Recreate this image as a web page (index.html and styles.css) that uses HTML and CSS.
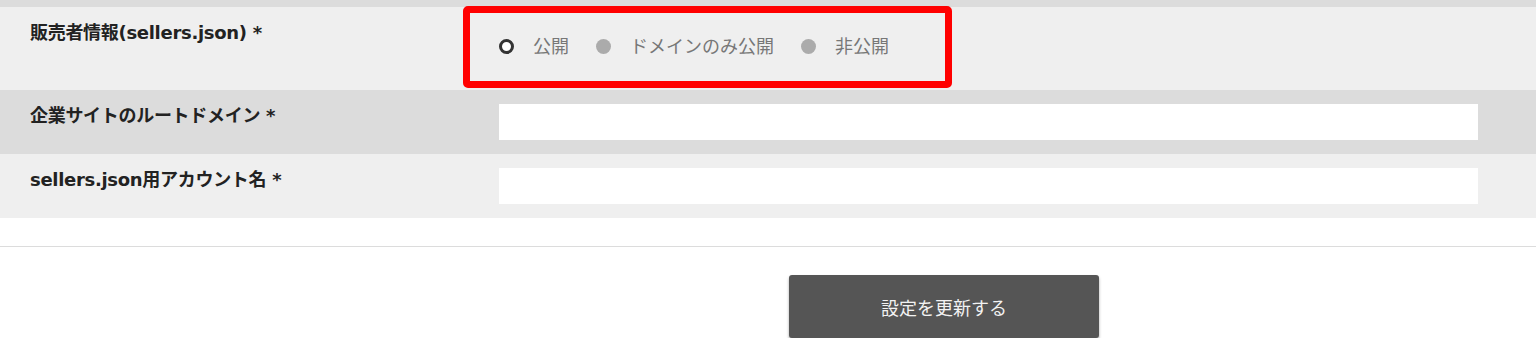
FILE: index.html
```html
<!DOCTYPE html>
<html lang="ja">
<head>
  <meta charset="UTF-8">
  <meta name="viewport" content="width=device-width, initial-scale=1.0">
  <title>sellers.json 設定</title>
  <link rel="stylesheet" href="styles.css">
</head>
<body>

  <!-- Settings Form -->
  <form class="settings-form">
    <div class="form-table">
      <div class="row-tail"></div>

      <div class="row row-light">
        <div class="row-label">販売者情報(sellers.json) *</div>
        <div class="row-field">
          <div class="radio-group highlight">
            <label class="radio"><span class="radio-mark checked"></span>公開</label>
            <label class="radio"><span class="radio-mark"></span>ドメインのみ公開</label>
            <label class="radio"><span class="radio-mark"></span>非公開</label>
          </div>
        </div>
      </div>

      <div class="row row-dark">
        <div class="row-label">企業サイトのルートドメイン *</div>
        <div class="row-field">
          <input type="text" class="text-input">
        </div>
      </div>

      <div class="row row-light">
        <div class="row-label">sellers.json用アカウント名 *</div>
        <div class="row-field">
          <input type="text" class="text-input">
        </div>
      </div>
    </div>

    <hr class="divider">

    <!-- Submit -->
    <div class="actions">
      <button type="button" class="submit-btn">設定を更新する</button>
    </div>
  </form>

</body>
</html>
```

FILE: styles.css
```css
/* General Reset */
*,
*::before,
*::after {
  margin: 0;
  padding: 0;
  box-sizing: border-box;
}

body {
  font-family: 'Noto Sans', 'Noto Sans CJK JP', sans-serif;
  font-size: 18px;
  background-color: #fff;
  color: #222;
}

/* Form Table */
.row-tail {
  height: 7px;
  background-color: #dcdcdc;
}

.row {
  display: grid;
  grid-template-columns: 499px 1fr;
  padding: 14px 58px 14px 0;
}

.row-light {
  background-color: #efefef;
}

.row-dark {
  background-color: #dcdcdc;
}

.row-label {
  padding-left: 30px;
  font-family: 'DejaVu Sans', 'Noto Sans CJK JP', sans-serif;
  font-weight: bold;
  letter-spacing: -0.3px;
  line-height: 24px;
  color: #222;
}

.text-input {
  display: block;
  width: 100%;
  height: 36px;
  border: none;
  background-color: #fff;
  padding: 0 10px;
  font-size: 16px;
}

/* Radio Buttons */
.radio-group {
  display: flex;
  gap: 27px;
  padding: 13px 0 18px;
  line-height: 24px;
}

.radio {
  display: flex;
  align-items: center;
  gap: 19px;
  color: #777;
}

.radio-mark {
  width: 15px;
  height: 15px;
  border-radius: 50%;
  background-color: #ababab;
}

.radio-mark.checked {
  background-color: #fff;
  border: 3px solid #333;
}

/* Red annotation frame */
.highlight {
  position: relative;
}

.highlight::after {
  content: "";
  position: absolute;
  left: -36px;
  top: -15px;
  width: 489px;
  height: 82px;
  border: 7px solid #ff0000;
  border-radius: 5px;
}

/* Divider */
.divider {
  border: none;
  border-top: 1px solid #dcdcdc;
  margin-top: 28px;
}

/* Submit */
.actions {
  padding: 28px 0 0 789px;
}

.submit-btn {
  width: 310px;
  height: 63px;
  background-color: #555;
  color: #f2f2f2;
  border: none;
  border-radius: 3px;
  box-shadow: 0 2px 3px rgba(0, 0, 0, 0.35);
  font-family: 'Noto Sans CJK JP', sans-serif;
  font-size: 18px;
  cursor: pointer;
}
```
